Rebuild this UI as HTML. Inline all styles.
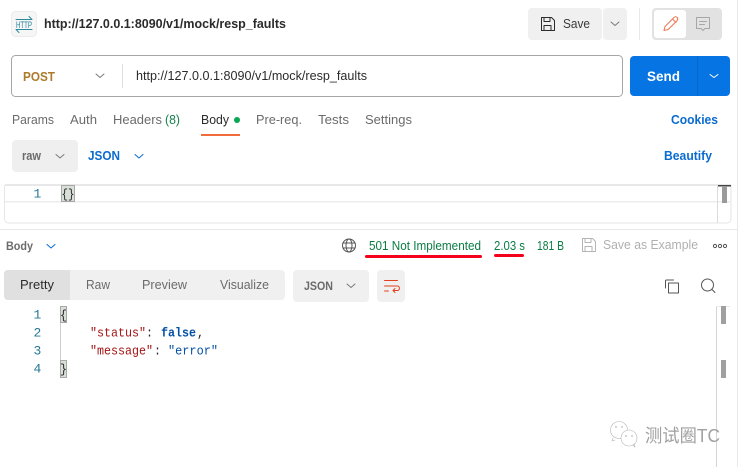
<!DOCTYPE html>
<html><head><meta charset="utf-8"><style>
html,body{margin:0;padding:0;background:#fff;width:743px;height:467px;overflow:hidden}
svg{display:block}
text{font-family:"Liberation Sans","Noto Sans CJK SC",sans-serif;font-size:12.5px;white-space:pre}
.m{font-family:"Liberation Mono",monospace;font-size:13px}
.t{fill:#6b6b6b}.b{font-weight:bold}.blue{fill:#0a6bd0}.g{fill:#0a7c42}
.c{fill:none;stroke-linecap:round;stroke-linejoin:round}
</style></head><body>
<svg width="743" height="467" viewBox="0 0 743 467" xmlns="http://www.w3.org/2000/svg">
<rect x="737" y="0" width="1" height="467" fill="#e8e8e8"/>
<!-- header -->
<rect x="11.500" y="11.500" width="25" height="25" rx="4" fill="#f6f6f6" stroke="#ececec"/>
<path d="M16 19.500H32M29 16.500l3 3M16 29.500H32M19 32.500l-3-3" class="c" stroke="#2a8a9c" stroke-width="1"/>
<text x="16" y="28" textLength="16" lengthAdjust="spacingAndGlyphs" style="font-size:9px" fill="#1f7f94">HTTP</text>
<text x="44" y="28" textLength="242" lengthAdjust="spacingAndGlyphs" fill="#2b2b2b" style="font-weight:bold">http://127.0.0.1:8090/v1/mock/resp_faults</text>
<rect x="528" y="8" width="74" height="32" rx="4" fill="#f0f0f0"/>
<rect x="603" y="8" width="24" height="32" rx="4" fill="#f0f0f0"/>
<path d="M541.500 17.500h10l3 3v10h-13zM544 17.500v4h6v-4M544 30.500v-5h7v5" class="c" stroke="#2b2b2b"/>
<text x="563" y="28" textLength="27" lengthAdjust="spacingAndGlyphs" fill="#3b3b3b">Save</text>
<path d="M611 22l4 3.500 4-3.500" class="c" stroke="#7a7a7a"/>
<rect x="639" y="8" width="1" height="32" fill="#e8e8e8"/>
<rect x="652" y="8" width="70" height="32" rx="4" fill="#e2e2e2"/>
<rect x="654" y="10" width="32" height="28" rx="3" fill="#fff"/>
<path d="M664 30.500l1-4 9-9c1-1 2.500-1 3.200 0s.8 2 0 3l-9 9zM672.500 19l3.500 3.500" class="c" stroke="#f07a58" stroke-width="1.100"/>
<path d="M696.500 17.500h13v11h-4.500l-2 2-2-2h-4.500zM699.500 21.500h7M699.500 24.500h5" class="c" stroke="#a6a6a6"/>
<!-- url -->
<rect x="11.500" y="55.500" width="611" height="41" rx="4" fill="#fff" stroke="#a6a6a6"/>
<text x="23" y="81" textLength="32" lengthAdjust="spacingAndGlyphs" class="b" fill="#ad7a2b">POST</text>
<path d="M96 74l4 3.500 4-3.500" class="c" stroke="#7a7a7a"/>
<rect x="122" y="64" width="1" height="24" fill="#dedede"/>
<text x="136" y="80" textLength="231" lengthAdjust="spacingAndGlyphs" fill="#2b2b2b">http://127.0.0.1:8090/v1/mock/resp_faults</text>
<rect x="630" y="56" width="100" height="40" rx="4" fill="#0774e3"/>
<rect x="697" y="56" width="1" height="40" fill="#0667c9"/>
<text x="647" y="81" textLength="33" lengthAdjust="spacingAndGlyphs" class="b" fill="#fff" style="font-size:14px">Send</text>
<path d="M710 74.500l4 3 4-3" class="c" stroke="#fff"/>
<!-- tabs -->
<text x="12" y="124" textLength="42" lengthAdjust="spacingAndGlyphs" class="t">Params</text>
<text x="70" y="124" textLength="27" lengthAdjust="spacingAndGlyphs" class="t">Auth</text>
<text x="113" y="124" textLength="49" lengthAdjust="spacingAndGlyphs" class="t">Headers</text>
<text x="165" y="124" textLength="15" lengthAdjust="spacingAndGlyphs" fill="#16804a">(8)</text>
<text x="201" y="124" textLength="28" lengthAdjust="spacingAndGlyphs" fill="#2b2b2b">Body</text>
<circle cx="237" cy="120" r="3" fill="#07a650"/>
<rect x="201" y="134" width="39" height="2" fill="#f26b3a"/>
<text x="256" y="124" textLength="46" lengthAdjust="spacingAndGlyphs" class="t">Pre-req.</text>
<text x="318" y="124" textLength="31" lengthAdjust="spacingAndGlyphs" class="t">Tests</text>
<text x="365" y="124" textLength="47" lengthAdjust="spacingAndGlyphs" class="t">Settings</text>
<text x="671" y="124" textLength="47" lengthAdjust="spacingAndGlyphs" class="b blue">Cookies</text>
<rect x="12" y="140" width="66" height="32" rx="4" fill="#efefef"/>
<text x="22" y="160" textLength="19" lengthAdjust="spacingAndGlyphs" class="b t">raw</text>
<path d="M56 154.500l4 3.500 4-3.500" class="c" stroke="#7a7a7a"/>
<text x="88" y="160" textLength="32" lengthAdjust="spacingAndGlyphs" class="b blue">JSON</text>
<path d="M135 154.500l4 3.500 4-3.500" class="c" stroke="#0a6bd0"/>
<text x="664" y="160" textLength="48" lengthAdjust="spacingAndGlyphs" class="b blue">Beautify</text>
<!-- editor -->
<path d="M4.500 185v34a4 4 0 0 0 4 4H727a4 4 0 0 0 4-4V185" fill="none" stroke="#e6e6e6"/>
<rect x="5" y="184" width="726" height="2" fill="#e8e8e8"/>
<rect x="5" y="201" width="726" height="1.500" fill="#ececec"/>
<rect x="717" y="186" width="1" height="37" fill="#dcdcdc"/>
<rect x="718" y="185" width="13" height="1.500" fill="#444"/>
<rect x="722" y="186" width="5" height="17" fill="#9a9a9a"/>
<text x="33.500" y="197.500" class="m" fill="#237893">1</text>
<rect x="61.500" y="185.500" width="13" height="16" fill="#d8e0d8" stroke="#a8a8a8"/>
<text x="61.500" y="198" class="m" textLength="13" lengthAdjust="spacingAndGlyphs" fill="#222">{}</text>
<rect x="0" y="229" width="737" height="1" fill="#e8e8e8"/>
<!-- response bar -->
<text x="6" y="250" textLength="27" lengthAdjust="spacingAndGlyphs" class="t" style="font-weight:bold;font-size:11.500px">Body</text>
<path d="M47 244.500l4 3.500 4-3.500" class="c" stroke="#0a6bd0"/>
<g class="c" stroke="#555"><circle cx="349" cy="245.500" r="6.500"/><ellipse cx="349" cy="245.500" rx="3" ry="6.500"/><path d="M343 243h12M343 248h12"/></g>
<text x="369" y="250" textLength="112" lengthAdjust="spacingAndGlyphs" class="g">501 Not Implemented</text>
<rect x="365" y="255" width="117" height="3" rx="1.500" fill="#f5001a"/>
<text x="494" y="250" textLength="31" lengthAdjust="spacingAndGlyphs" class="g">2.03 s</text>
<rect x="494" y="254" width="30" height="3" rx="1.500" fill="#f5001a"/>
<text x="537" y="250" textLength="27" lengthAdjust="spacingAndGlyphs" class="g">181 B</text>
<path d="M582.500 238.500h10l3 3v10h-13zM585 238.500v4h6v-4M585 251.500v-5h7v5" class="c" stroke="#b4b4b4"/>
<text x="603" y="249" textLength="95" lengthAdjust="spacingAndGlyphs" fill="#b0b0b0">Save as Example</text>
<g fill="none" stroke="#555"><circle cx="715" cy="246" r="1.600"/><circle cx="720" cy="246" r="1.600"/><circle cx="725" cy="246" r="1.600"/></g>
<!-- response tabs -->
<rect x="4" y="270" width="281" height="30" rx="4" fill="#f0f0f0"/>
<path d="M8 270H70V300H8a4 4 0 0 1-4-4V274a4 4 0 0 1 4-4z" fill="#e0e0e0"/>
<text x="20" y="289" textLength="34" lengthAdjust="spacingAndGlyphs" fill="#2b2b2b">Pretty</text>
<text x="86" y="289" textLength="24" lengthAdjust="spacingAndGlyphs" class="t">Raw</text>
<text x="142" y="289" textLength="45" lengthAdjust="spacingAndGlyphs" class="t">Preview</text>
<text x="220" y="289" textLength="49" lengthAdjust="spacingAndGlyphs" class="t">Visualize</text>
<rect x="293" y="270" width="76" height="32" rx="4" fill="#f0f0f0"/>
<text x="304" y="290" textLength="29" lengthAdjust="spacingAndGlyphs" class="t" style="font-weight:bold;font-size:11.500px">JSON</text>
<path d="M347 284l4 3.500 4-3.500" class="c" stroke="#7a7a7a"/>
<rect x="377" y="270" width="28" height="32" rx="4" fill="#f0f0f0"/>
<path d="M384.500 280.500h13M384.500 286h13c2.500 0 2.500 4.500 0 4.500h-4M395 288.500l-2 2 2 2M384.500 291h4" class="c" stroke="#e2401f"/>
<path d="M665.500 288.500v-7a1 1 0 0 1 1-1h7M668.500 283.500h10v10h-10z" class="c" stroke="#555" transform="translate(0,-.5)"/>
<circle cx="707.500" cy="285" r="6" class="c" stroke="#555"/><path d="M712 289.500l3 3" class="c" stroke="#555"/>
<!-- code -->
<text x="33.500" y="318.500" class="m" fill="#237893">1</text>
<text x="33.500" y="336.500" class="m" fill="#237893">2</text>
<text x="33.500" y="354.500" class="m" fill="#237893">3</text>
<text x="33.500" y="372.500" class="m" fill="#237893">4</text>
<rect x="60" y="322" width="1" height="38" fill="#cfcfcf"/>
<rect x="60.500" y="306.500" width="6" height="16" fill="#d8e0d8" stroke="#a8a8a8"/>
<rect x="60.500" y="360.500" width="6" height="17" fill="#d8e0d8" stroke="#a8a8a8"/>
<text x="60" y="319" class="m" fill="#222" textLength="7" lengthAdjust="spacingAndGlyphs">{</text>
<text x="60" y="373" class="m" fill="#222" textLength="7" lengthAdjust="spacingAndGlyphs">}</text>
<text x="90" y="336.500" class="m" fill="#a31515" textLength="56" lengthAdjust="spacingAndGlyphs">"status"</text>
<text x="146" y="336.500" class="m" fill="#222" textLength="7" lengthAdjust="spacingAndGlyphs">:</text>
<text x="161" y="336.500" class="m" fill="#0451a5" textLength="35" lengthAdjust="spacingAndGlyphs" style="font-weight:bold">false</text>
<text x="197" y="336.500" class="m" fill="#222" textLength="7" lengthAdjust="spacingAndGlyphs">,</text>
<text x="90" y="354.500" class="m" fill="#a31515" textLength="63" lengthAdjust="spacingAndGlyphs">"message"</text>
<text x="154" y="354.500" class="m" fill="#222" textLength="7" lengthAdjust="spacingAndGlyphs">:</text>
<text x="168" y="354.500" class="m" fill="#0451a5" textLength="50" lengthAdjust="spacingAndGlyphs">"error"</text>
<rect x="716" y="306" width="1" height="161" fill="#d4d4d4"/>
<rect x="716" y="306" width="14" height="1" fill="#e8e8e8"/>
<rect x="721" y="306" width="5" height="18" fill="#a0a0a0"/>
<rect x="721" y="360" width="5" height="18" fill="#a0a0a0"/>
<!-- watermark -->
<g class="c" stroke="#b4b4b4" stroke-width=".6"><circle cx="619" cy="430" r="8.500" fill="#fff"/><circle cx="629" cy="438" r="8" fill="#fff"/><path d="M613 438l-1 3 3-1M633 445l2 2-.5-3"/></g>
<g fill="#999"><circle cx="616" cy="427" r=".7"/><circle cx="622" cy="427" r=".7"/><circle cx="626" cy="436" r=".7"/><circle cx="632" cy="436" r=".7"/></g>
<text x="645" y="442" textLength="75" lengthAdjust="spacingAndGlyphs" fill="#a0a0a0" style="font-size:18px">测试圈TC</text>
</svg>
</body></html>
